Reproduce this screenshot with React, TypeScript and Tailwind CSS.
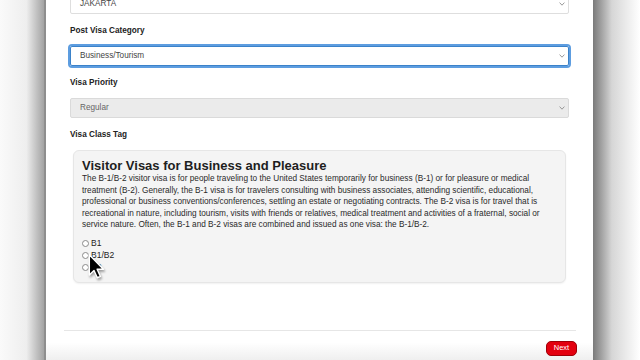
const Chevron = () => (
  <svg width="6" height="4" viewBox="0 0 6 4" className="shrink-0">
    <path d="M0.6 0.6 L3 3.2 L5.4 0.6" fill="none" stroke="#8d8d8d" strokeWidth="0.9" />
  </svg>
);

type SelectProps = { value: string; className?: string };

const FakeSelect = ({ value, className = "" }: SelectProps) => (
  <div
    className={`flex h-[20px] items-center justify-between rounded-[2px] border pl-[9px] pr-[3px] text-[8.2px] ${className}`}
  >
    <span>{value}</span>
    <Chevron />
  </div>
);

const Label = ({ text }: { text: string }) => (
  <div className="mt-[11px] mb-[9px] text-[8.2px] leading-[12px] font-bold text-[#222]">{text}</div>
);

const Radio = ({ label }: { label: string }) => (
  <label className="flex h-[12px] items-center gap-[2px] text-[8.5px] text-[#222]">
    <span className="h-[7px] w-[7px] rounded-full border border-[#8a8a8a] bg-white" />
    {label}
  </label>
);

const Cursor = () => (
  <svg
    width="17"
    height="27"
    viewBox="0 0 13 20"
    className="absolute left-[88px] top-[253px] drop-shadow-[1px_2px_1px_rgba(0,0,0,0.35)]"
  >
    <path
      d="M1 1 L1 16.5 L4.6 13 L7.1 18.6 L9.5 17.6 L7 12.1 L11.8 12.1 Z"
      fill="#000"
      stroke="#fff"
      strokeWidth="1.1"
      strokeLinejoin="round"
    />
  </svg>
);

export default function App() {
  return (
    <div className="relative flex h-[360px] w-[640px] overflow-hidden bg-white font-['Liberation_Sans',Arial,sans-serif]">
      <div className="w-[44px] shrink-0 bg-linear-to-r from-[#fafafa] via-[#eeeeee] via-60% to-[#a3a3a3]" />
      <div className="w-[2px] shrink-0 bg-[#8e8e8e]" />

      <div className="flex w-[547px] shrink-0 flex-col bg-white">
        <div className="-mt-[6px] px-[24px]">
          <FakeSelect value="JAKARTA" className="border-[#dedede] bg-white text-[#444]" />

          <Label text="Post Visa Category" />
          <FakeSelect
            value="Business/Tourism"
            className="border-[#3b82c9] bg-white text-[#444] outline-2 outline-[#5d9de0]"
          />

          <Label text="Visa Priority" />
          <FakeSelect value="Regular" className="border-[#dadada] bg-[#ebebeb] text-[#666]" />

          <Label text="Visa Class Tag" />

          <div className="mx-[3px] mt-[2px] rounded-[6px] border border-[#e6e6e6] bg-[#f4f4f4] px-[8px] pt-[8px] pb-[8px] shadow-[0_1px_2px_rgba(0,0,0,0.06)]">
            <h2 className="text-[13px] leading-[14px] font-bold text-[#1e1e1e]">
              Visitor Visas for Business and Pleasure
            </h2>
            <p className="text-[8.25px] leading-[11.5px] text-[#2a2a2a]">
              The B-1/B-2 visitor visa is for people traveling to the United States temporarily for business (B-1) or for
              pleasure or medical treatment (B-2). Generally, the B-1 visa is for travelers consulting with business
              associates, attending scientific, educational, professional or business conventions/conferences, settling an
              estate or negotiating contracts. The B-2 visa is for travel that is recreational in nature, including tourism,
              visits with friends or relatives, medical treatment and activities of a fraternal, social or service nature.
              Often, the B-1 and B-2 visas are combined and issued as one visa: the B-1/B-2.
            </p>
            <div className="mt-[7px] flex flex-col">
              <Radio label="B1" />
              <Radio label="B1/B2" />
              <Radio label="B2" />
            </div>
          </div>
        </div>

        <div className="mt-[47px] flex flex-1 flex-col pl-[18px] pr-[17px]">
          <div className="h-px bg-[#e6e6e6]" />
          <div className="-mx-[18px] flex flex-1 justify-end bg-linear-to-b from-white from-40% to-[#efefef] pr-[17px] pt-[10px]">
            <button className="flex h-[15px] w-[31px] items-center justify-center rounded-[5px] border border-[#9e0008] bg-[#e3000f] text-[7.5px] text-white">
              Next
            </button>
          </div>
        </div>
      </div>

      <div className="flex-1 bg-linear-to-r from-[#7a7a7a] via-[#d6d6d6] via-40% to-white" />

      <Cursor />
    </div>
  );
}
